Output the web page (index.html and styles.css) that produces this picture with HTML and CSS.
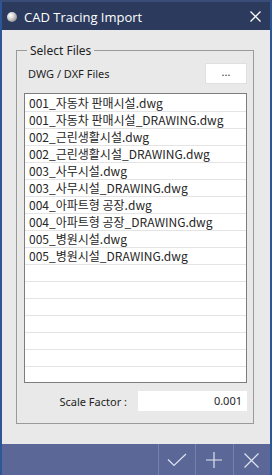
FILE: index.html
```html
<!DOCTYPE html>
<html>
<head>
<meta charset="utf-8">
<link rel="stylesheet" href="styles.css">
</head>
<body>
<div class="window">
  <div class="titlebar">
    <span class="app-icon"></span>
    <span class="title">CAD Tracing Import</span>
    <svg class="close" width="11" height="11" viewBox="0 0 11 11"><path d="M0.5 0.5 L10.5 10.5 M10.5 0.5 L0.5 10.5" stroke="#ffffff" stroke-width="1.3" fill="none"/></svg>
  </div>
  <div class="content">
    <fieldset class="group">
      <legend>Select Files</legend>
      <div class="file-row">
        <span class="label">DWG / DXF Files</span>
        <button class="browse">...</button>
      </div>
      <div class="list">
        <div class="row">001_자동차 판매시설.dwg</div>
        <div class="row">001_자동차 판매시설_DRAWING.dwg</div>
        <div class="row">002_근린생활시설.dwg</div>
        <div class="row">002_근린생활시설_DRAWING.dwg</div>
        <div class="row">003_사무시설.dwg</div>
        <div class="row">003_사무시설_DRAWING.dwg</div>
        <div class="row">004_아파트형 공장.dwg</div>
        <div class="row">004_아파트형 공장_DRAWING.dwg</div>
        <div class="row">005_병원시설.dwg</div>
        <div class="row">005_병원시설_DRAWING.dwg</div>
        <div class="row"></div>
        <div class="row"></div>
        <div class="row"></div>
        <div class="row"></div>
        <div class="row"></div>
        <div class="row"></div>
        <div class="row last"></div>
      </div>
      <div class="scale-row">
        <span class="scale-label">Scale Factor :</span>
        <div class="scale-input">0.001</div>
      </div>
    </fieldset>
  </div>
  <div class="bottombar">
    <div class="spacer"></div>
    <div class="btn">
      <svg width="20" height="14" viewBox="0 0 20 14"><path d="M1 6.5 L7 12.5 L19 1" stroke="#dfe3f0" stroke-width="1.2" fill="none"/></svg>
    </div>
    <div class="btn">
      <svg width="16" height="16" viewBox="0 0 16 16"><path d="M8 0 V16 M0 8 H16" stroke="#dfe3f0" stroke-width="1.2" fill="none"/></svg>
    </div>
    <div class="btn">
      <svg width="15" height="15" viewBox="0 0 15 15"><path d="M0.5 0.5 L14.5 14.5 M14.5 0.5 L0.5 14.5" stroke="#dfe3f0" stroke-width="1.2" fill="none"/></svg>
    </div>
  </div>
</div>
</body>
</html>
```

FILE: styles.css
```css
* { box-sizing: border-box; }
html, body {
  margin: 0;
  padding: 0;
  width: 272px;
  height: 475px;
  overflow: hidden;
}
body {
  font-family: "Noto Sans", "Noto Sans CJK KR", sans-serif;
  font-size: 12px;
  color: #1e1e1e;
}
.window {
  width: 272px;
  height: 475px;
  display: flex;
  flex-direction: column;
  border-left: 2px solid #2b5796;
  border-right: 2px solid #2b5796;
  border-top: 2px solid #3a4c78;
  background: #e9e9e9;
}
.titlebar {
  height: 28px;
  flex: none;
  background: #2c3b5d;
  display: flex;
  align-items: center;
  padding-left: 5px;
  padding-right: 8px;
  color: #ffffff;
}
.app-icon {
  width: 10px;
  height: 10px;
  border-radius: 50%;
  background: radial-gradient(circle at 35% 35%, #ffffff 0%, #d8d8d8 35%, #8a8a8a 80%, #5a5a5a 100%);
  margin-right: 7px;
  margin-top: 2px;
}
.title {
  font-family: "Open Sans", "Noto Sans", sans-serif;
  font-size: 13px;
  flex: 1;
  margin-top: 1px;
}
.close {
  margin-right: 1px;
  margin-top: 1px;
}
.content {
  flex: 1;
  padding: 12px 16px 20px 14px;
  display: flex;
}
.group {
  flex: 1;
  margin: 0;
  border: 1px solid #9a9a9a;
  padding: 4px 6px 12px 7px;
  display: flex;
  flex-direction: column;
  min-width: 0;
}
.group legend {
  padding: 0 3px;
  margin-left: 3px;
  font-size: 12px;
  color: #1e1e1e;
}
.file-row {
  display: flex;
  align-items: center;
  justify-content: space-between;
  height: 21px;
  margin-bottom: 9px;
}
.label {
  padding-left: 4px;
  font-size: 11px;
}
.browse {
  width: 42px;
  height: 21px;
  background: #ffffff;
  border: 1px solid #e0e0e0;
  font-family: "Noto Sans", sans-serif;
  font-size: 11px;
  color: #333;
  padding: 0 0 4px 0;
  margin: 0;
}
.list {
  height: 290px;
  border: 1px solid #7d7d7d;
  background: #ffffff;
  overflow: hidden;
  padding-top: 1px;
}
.row {
  height: 17px;
  border-bottom: 1px solid #e4e4e4;
  padding-left: 4px;
  line-height: 16px;
  font-family: "Noto Sans CJK KR", "Noto Sans", sans-serif;
  font-size: 12px;
  color: #262626;
  white-space: nowrap;
}
.scale-row {
  display: flex;
  align-items: center;
  margin-top: 8px;
  height: 20px;
}
.scale-label {
  width: 102px;
  text-align: right;
  font-size: 11px;
  margin-left: 1px;
}
.scale-input {
  margin-left: 11px;
  flex: 1;
  height: 20px;
  background: #ffffff;
  text-align: right;
  padding-right: 5px;
  line-height: 20px;
  font-size: 11px;
}
.bottombar {
  height: 32px;
  flex: none;
  background: #5b6897;
  display: flex;
}
.spacer { flex: 1; }
.btn {
  width: 37.5px;
  border-left: 1px solid #7582ad;
  display: flex;
  align-items: center;
  justify-content: center;
}
```
